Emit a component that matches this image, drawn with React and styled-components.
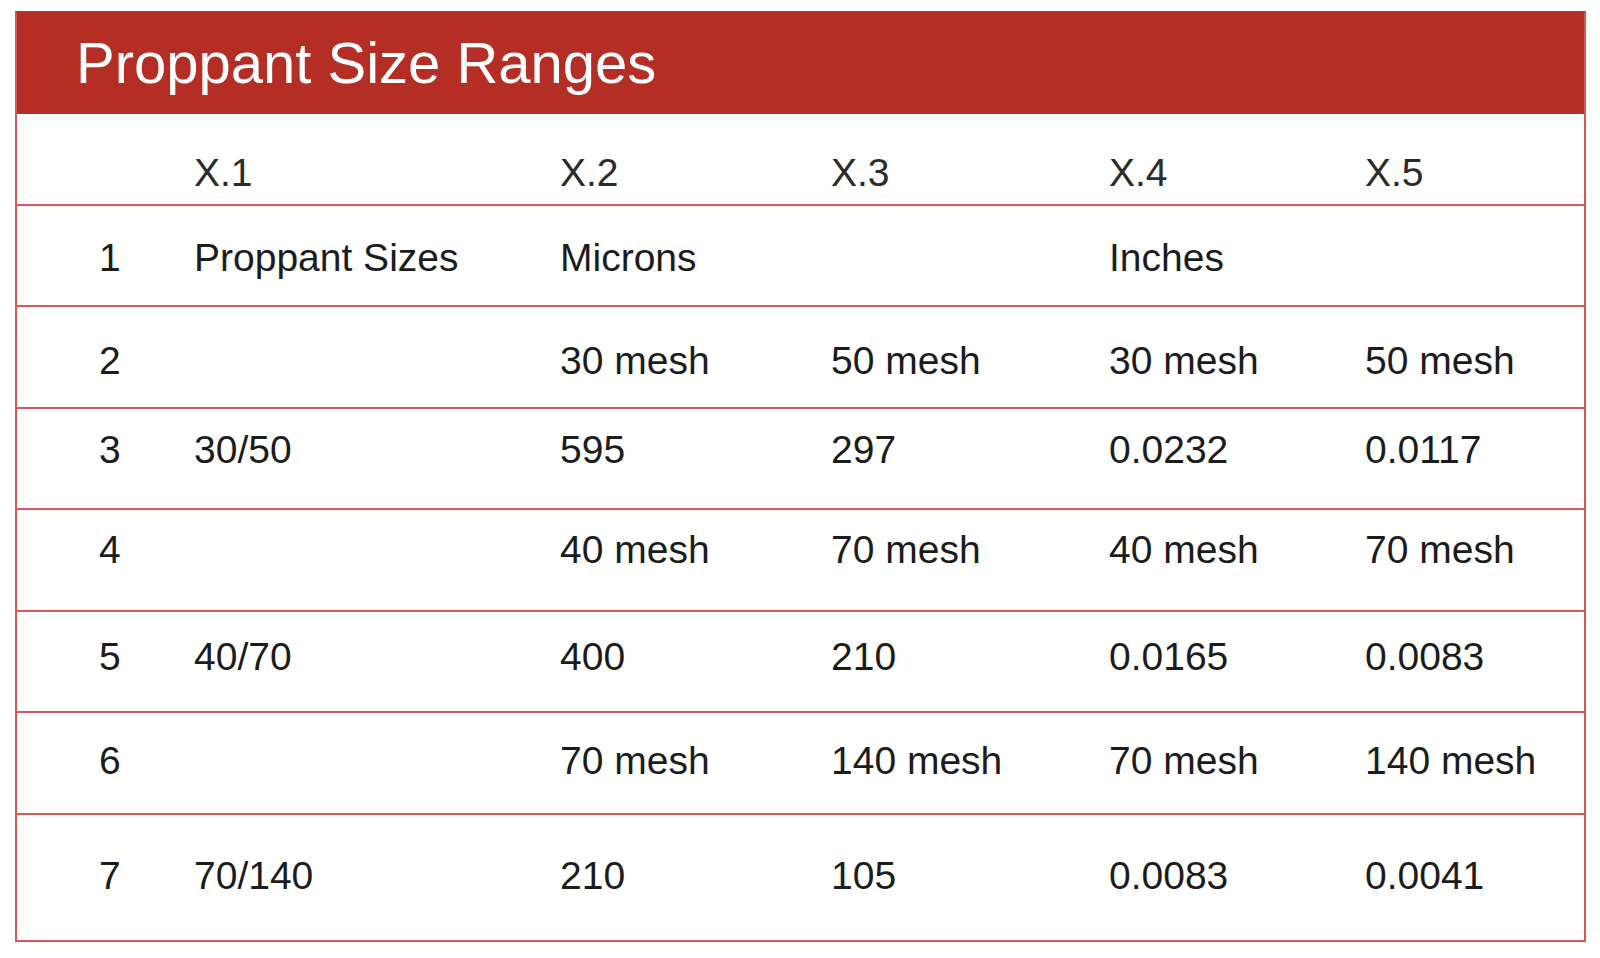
import React from 'react';
import styled, { createGlobalStyle } from 'styled-components';

const GlobalStyle = createGlobalStyle`
  html, body {
    margin: 0;
    padding: 0;
    background: #ffffff;
  }
  body {
    font-family: "Liberation Sans", Arial, Helvetica, sans-serif;
    color: #1c1c1c;
  }
`;

const Page = styled.div`
  padding: 11px 0 0 15px;
`;

const Frame = styled.div`
  width: 1571px;
  box-sizing: border-box;
  border: 2px solid #d4585a;
  border-top-color: #b9342c;
`;

const Title = styled.h1`
  margin: 0;
  height: 101px;
  display: flex;
  align-items: center;
  padding-left: 59px;
  padding-bottom: 3px;
  box-sizing: border-box;
  background: #b52e25;
  color: #ffffff;
  font-size: 58px;
  font-weight: 400;
`;

const Row = styled.div`
  display: grid;
  grid-template-columns: 177px 366px 271px 278px 256px 1fr;
  align-items: center;
  box-sizing: border-box;
  height: ${p => p.$height}px;
  border-bottom: ${p => (p.$last ? 'none' : '2px solid #d6595b')};
  font-size: 39px;
  line-height: 1;
`;

const Cell = styled.div`
  transform: translateY(${p => p.$shift || 0}px);
  color: ${p => (p.$head ? '#2b2b2b' : '#1c1c1c')};
  white-space: nowrap;
`;

const IndexCell = styled(Cell)`
  padding-left: 82px;
`;

const columns = ['X.1', 'X.2', 'X.3', 'X.4', 'X.5'];

// shift: small per-row nudge of the text baseline, as in the source table
const rows = [
  { id: '1', cells: ['Proppant Sizes', 'Microns', '', 'Inches', ''], height: 101, shift: 2 },
  { id: '2', cells: ['', '30 mesh', '50 mesh', '30 mesh', '50 mesh'], height: 102, shift: 3 },
  { id: '3', cells: ['30/50', '595', '297', '0.0232', '0.0117'], height: 101, shift: -9 },
  { id: '4', cells: ['', '40 mesh', '70 mesh', '40 mesh', '70 mesh'], height: 102, shift: -11 },
  { id: '5', cells: ['40/70', '400', '210', '0.0165', '0.0083'], height: 101, shift: -5 },
  { id: '6', cells: ['', '70 mesh', '140 mesh', '70 mesh', '140 mesh'], height: 102, shift: -3 },
  { id: '7', cells: ['70/140', '210', '105', '0.0083', '0.0041'], height: 125, shift: -2, last: true },
];

export default function App() {
  return (
    <Page>
      <GlobalStyle />
      <Frame>
        <Title>Proppant Size Ranges</Title>
        <Row $height={92}>
          <IndexCell $head />
          {columns.map(c => (
            <Cell key={c} $head $shift={13}>{c}</Cell>
          ))}
        </Row>
        {rows.map(r => (
          <Row key={r.id} $height={r.height} $last={r.last}>
            <IndexCell $shift={r.shift}>{r.id}</IndexCell>
            {r.cells.map((c, i) => (
              <Cell key={i} $shift={r.shift}>{c}</Cell>
            ))}
          </Row>
        ))}
      </Frame>
    </Page>
  );
}
